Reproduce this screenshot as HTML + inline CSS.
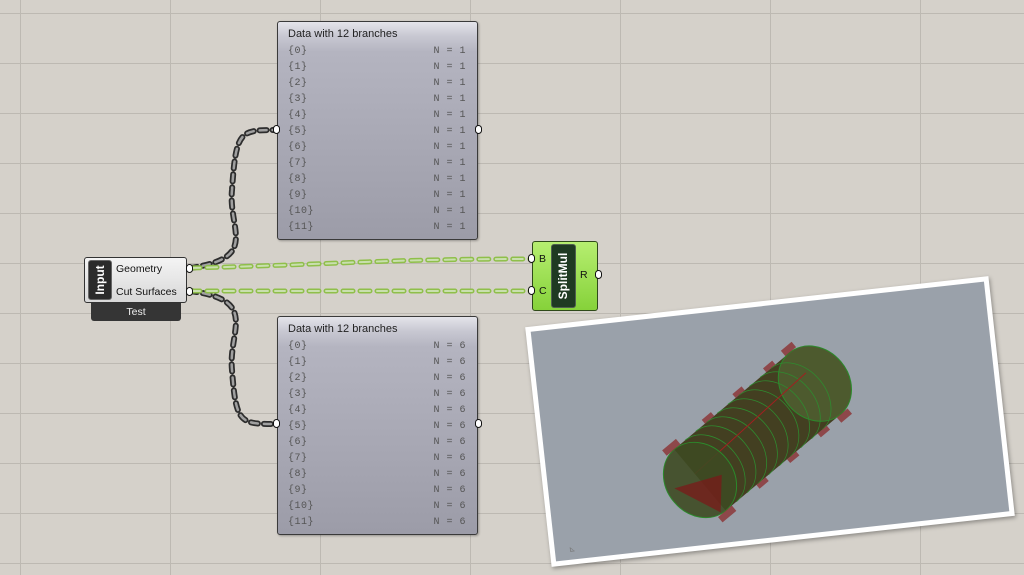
<!DOCTYPE html>
<html><head><meta charset="utf-8"><style>
*{margin:0;padding:0;box-sizing:border-box}
body{width:1024px;height:575px;overflow:hidden;position:relative;background:#d5d1ca;font-family:"Liberation Sans",sans-serif;}
.grid{position:absolute;inset:0;background-image:
linear-gradient(to bottom,#bdb9b2 1px,transparent 1px),linear-gradient(to right,#bdb9b2 1px,transparent 1px);
background-size:150px 50px;background-position:20px 13px;background-color:#d5d1ca}
.panel{position:absolute;left:277px;width:201px;height:219px;border:1px solid #3a3a3a;border-radius:3px;
background:linear-gradient(#e4e4ea 0px,#c8c8d2 14px,#b4b4c0 30px,#9c9ca8 100%);box-shadow:1px 1px 2px rgba(0,0,0,.3)}
.panel .t{position:absolute;left:10px;top:6px;font-size:11px;color:#222}
.row{position:absolute;left:10px;width:178px;font-family:"Liberation Mono",monospace;font-size:10px;color:#555;height:14px;letter-spacing:.5px}
.row span{position:absolute;right:0}
.port{position:absolute;width:7px;height:9px;border:1.5px solid #111;border-radius:5px;background:#fff}
.node{position:absolute;border:1px solid #333;border-radius:3px;}
</style></head><body>
<div class="grid"></div>
<svg width="1024" height="575" style="position:absolute;left:0;top:0">
<g fill="none" stroke-linecap="round">
<path d="M190 268 C260 258 228 230 232 190 C236 130 240 130 277 130" stroke="#2d2d2d" stroke-width="6" stroke-dasharray="7 6"/>
<path d="M190 268 C260 258 228 230 232 190 C236 130 240 130 277 130" stroke="#a0a0a0" stroke-width="2.5" stroke-dasharray="7 6"/>
<path d="M190 291 C260 300 228 330 232 370 C236 424 240 424 277 424" stroke="#2d2d2d" stroke-width="6" stroke-dasharray="7 6"/>
<path d="M190 291 C260 300 228 330 232 370 C236 424 240 424 277 424" stroke="#a0a0a0" stroke-width="2.5" stroke-dasharray="7 6"/>
<path d="M190 268 C350 264 380 259 532 259" stroke="#8fbf4a" stroke-width="5" stroke-dasharray="10 7"/>
<path d="M190 268 C350 264 380 259 532 259" stroke="#c9dfae" stroke-width="2" stroke-dasharray="10 7"/>
<path d="M190 291 L532 291" stroke="#8fbf4a" stroke-width="5" stroke-dasharray="10 7"/>
<path d="M190 291 L532 291" stroke="#c9dfae" stroke-width="2" stroke-dasharray="10 7"/>
</g></svg>

<div class="panel" style="top:21px"><div class="t">Data with 12 branches</div>
<div class="row" style="top:24px">{0}<span>N = 1</span></div>
<div class="row" style="top:40px">{1}<span>N = 1</span></div>
<div class="row" style="top:56px">{2}<span>N = 1</span></div>
<div class="row" style="top:72px">{3}<span>N = 1</span></div>
<div class="row" style="top:88px">{4}<span>N = 1</span></div>
<div class="row" style="top:104px">{5}<span>N = 1</span></div>
<div class="row" style="top:120px">{6}<span>N = 1</span></div>
<div class="row" style="top:136px">{7}<span>N = 1</span></div>
<div class="row" style="top:152px">{8}<span>N = 1</span></div>
<div class="row" style="top:168px">{9}<span>N = 1</span></div>
<div class="row" style="top:184px">{10}<span>N = 1</span></div>
<div class="row" style="top:200px">{11}<span>N = 1</span></div>
</div>
<div class="port" style="left:273px;top:125px"></div><div class="port" style="left:475px;top:125px"></div>

<div class="panel" style="top:316px"><div class="t">Data with 12 branches</div>
<div class="row" style="top:24px">{0}<span>N = 6</span></div>
<div class="row" style="top:40px">{1}<span>N = 6</span></div>
<div class="row" style="top:56px">{2}<span>N = 6</span></div>
<div class="row" style="top:72px">{3}<span>N = 6</span></div>
<div class="row" style="top:88px">{4}<span>N = 6</span></div>
<div class="row" style="top:104px">{5}<span>N = 6</span></div>
<div class="row" style="top:120px">{6}<span>N = 6</span></div>
<div class="row" style="top:136px">{7}<span>N = 6</span></div>
<div class="row" style="top:152px">{8}<span>N = 6</span></div>
<div class="row" style="top:168px">{9}<span>N = 6</span></div>
<div class="row" style="top:184px">{10}<span>N = 6</span></div>
<div class="row" style="top:200px">{11}<span>N = 6</span></div>
</div>
<div class="port" style="left:273px;top:419px"></div><div class="port" style="left:475px;top:419px"></div>

<!-- Input node -->
<div style="position:absolute;left:91px;top:300px;width:90px;height:21px;background:#353535;border-radius:0 0 3px 3px;color:#eee;font-size:10.5px;text-align:center;padding-top:6px">Test</div>
<div class="node" style="left:84px;top:257px;width:103px;height:46px;background:linear-gradient(#f4f4f4,#d8d8d8)"></div>
<div style="position:absolute;left:88px;top:260px;width:24px;height:40px;background:#2b2b2b;border-radius:3px;border:1px solid #666"></div>
<div style="position:absolute;left:100px;top:280px;transform:translate(-50%,-50%) rotate(-90deg);color:#fff;font-weight:bold;font-size:12px">Input</div>
<div style="position:absolute;left:116px;top:263px;font-size:10.5px;color:#111">Geometry</div>
<div style="position:absolute;left:116px;top:286px;font-size:10.5px;color:#111">Cut Surfaces</div>
<div class="port" style="left:186px;top:264px"></div><div class="port" style="left:186px;top:287px"></div>

<!-- SplitMul -->
<div class="node" style="left:532px;top:241px;width:66px;height:70px;background:linear-gradient(#b6ee70,#86d23a);border-color:#2f4a1a"></div>
<div style="position:absolute;left:551px;top:244px;width:25px;height:64px;background:#1f3a22;border-radius:3px;border:1px solid #506050"></div>
<div style="position:absolute;left:563px;top:276px;transform:translate(-50%,-50%) rotate(-90deg);color:#fff;font-weight:bold;font-size:12px">SplitMul</div>
<div style="position:absolute;left:539px;top:253px;font-size:10.5px;color:#111">B</div>
<div style="position:absolute;left:539px;top:285px;font-size:10.5px;color:#111">C</div>
<div style="position:absolute;left:580px;top:269px;font-size:10.5px;color:#111">R</div>
<div class="port" style="left:528px;top:254px"></div><div class="port" style="left:528px;top:286px"></div><div class="port" style="left:595px;top:270px"></div>

<!-- Photo -->
<div style="position:absolute;left:537px;top:301px;width:466px;height:241px;transform:rotate(-6.3deg);background:#fff;padding:5px;box-shadow:1px 2px 4px rgba(0,0,0,.35)">
<div style="width:100%;height:100%;background:#9aa1aa;position:relative">
<div style="position:absolute;left:14px;bottom:6px;font-size:8px;color:#777">⊾</div>
</div></div>
<svg width="1024" height="575" style="position:absolute;left:0;top:0">
<g transform="translate(700,480) rotate(-40)">
<rect x="0" y="-40" width="150" height="80" fill="#3c3616" opacity=".92"/>
<ellipse cx="150" cy="0" rx="34" ry="40" fill="#4d5a2e" stroke="#2b8a2b" stroke-width="1"/>
<g fill="none" stroke="#2f8a2f" stroke-width=".8">
<path d="M14 -40 a30 40 0 0 1 0 80"/><path d="M28 -40 a30 40 0 0 1 0 80"/><path d="M42 -40 a30 40 0 0 1 0 80"/>
<path d="M56 -40 a30 40 0 0 1 0 80"/><path d="M70 -40 a30 40 0 0 1 0 80"/><path d="M84 -40 a30 40 0 0 1 0 80"/>
<path d="M98 -40 a30 40 0 0 1 0 80"/><path d="M112 -40 a30 40 0 0 1 0 80"/><path d="M126 -40 a30 40 0 0 1 0 80"/>
</g>
<line x1="0" y1="-8" x2="150" y2="-14" stroke="#a02020" stroke-width="1"/>
<ellipse cx="0" cy="0" rx="34" ry="40" fill="#3e4a22" fill-opacity=".9" stroke="#2b8a2b" stroke-width="1"/>
<path d="M-25 -10 L20 10 L-5 38 Z" fill="#7a1a1a" opacity=".75"/>
<g fill="#8a2a2a" opacity=".75">
<rect x="-10" y="-47" width="18" height="7"/><rect x="-10" y="40" width="18" height="7"/>
<rect x="40" y="-45" width="12" height="5"/><rect x="40" y="40" width="12" height="5"/>
<rect x="80" y="-45" width="12" height="5"/><rect x="80" y="40" width="12" height="5"/>
<rect x="120" y="-45" width="12" height="5"/><rect x="120" y="40" width="12" height="5"/>
<rect x="145" y="-47" width="14" height="7"/><rect x="145" y="40" width="14" height="7"/>
</g></g></svg>
</body></html>
